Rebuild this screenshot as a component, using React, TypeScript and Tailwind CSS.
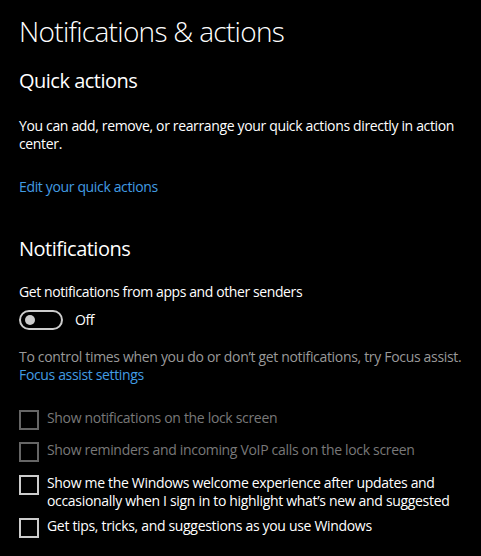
const font = { fontFamily: '"Open Sans", "Noto Sans", sans-serif' };

interface CheckRowProps {
  label: React.ReactNode;
  disabled?: boolean;
  className?: string;
}

const CheckRow = ({ label, disabled, className }: CheckRowProps) => (
  <div className={`flex items-start gap-[8px] ${className ?? ''}`}>
    <span
      className={`h-[20px] w-[20px] shrink-0 border-2 ${
        disabled ? 'border-[#666666]' : 'border-[#cccccc]'
      }`}
    />
    <span
      className={`-mt-px text-[14px] leading-[18px] tracking-[-0.32px] ${
        disabled ? 'text-[#787878]' : 'text-white'
      }`}
    >
      {label}
    </span>
  </div>
);

export default function App() {
  return (
    <div className="h-[556px] w-[481px] overflow-hidden bg-black pl-[19px] pt-[13px] text-white" style={font}>
      {/* Header */}
      <h1 className="text-[28px] font-light leading-[36px] tracking-[-0.7px]">Notifications &amp; actions</h1>

      {/* Quick actions */}
      <h2 className="mt-[18px] text-[20px] leading-[28px] tracking-[-0.5px]">Quick actions</h2>
      <p className="mt-[22px] pr-[8px] text-[14px] leading-[18px] tracking-[-0.35px]">
        You can add, remove, or rearrange your quick actions directly in action center.
      </p>
      <a className="mt-[25px] block text-[14px] leading-[18px] tracking-[-0.35px] text-[#429ce3]">
        Edit your quick actions
      </a>

      {/* Notifications */}
      <h2 className="mt-[39px] text-[20px] leading-[28px] tracking-[-0.5px]">Notifications</h2>
      <p className="mt-[20px] text-[14px] leading-[18px] tracking-[-0.4px]">
        Get notifications from apps and other senders
      </p>
      <div className="mt-[9px] flex items-center gap-[12px]">
        <div className="flex h-[20px] w-[44px] items-center rounded-full border-2 border-[#cccccc] pl-[4px]">
          <span className="h-[10px] w-[10px] rounded-full bg-[#cccccc]" />
        </div>
        <span className="text-[14px] leading-[18px] tracking-[-0.4px]">Off</span>
      </div>
      <p className="mt-[18px] text-[14px] leading-[18px] tracking-[-0.32px] text-[#999999]">
        To control times when you do or don’t get notifications, try Focus assist.
      </p>
      <a className="block text-[14px] leading-[18px] tracking-[-0.35px] text-[#429ce3]">Focus assist settings</a>

      <CheckRow className="mt-[26px]" disabled label="Show notifications on the lock screen" />
      <CheckRow className="mt-[12px]" disabled label="Show reminders and incoming VoIP calls on the lock screen" />
      <CheckRow
        className="mt-[13px]"
        label={
          <>
            Show me the Windows welcome experience after updates and
            <br />
            occasionally when I sign in to highlight what’s new and suggested
          </>
        }
      />
      <CheckRow className="mt-[8px]" label="Get tips, tricks, and suggestions as you use Windows" />
    </div>
  );
}
